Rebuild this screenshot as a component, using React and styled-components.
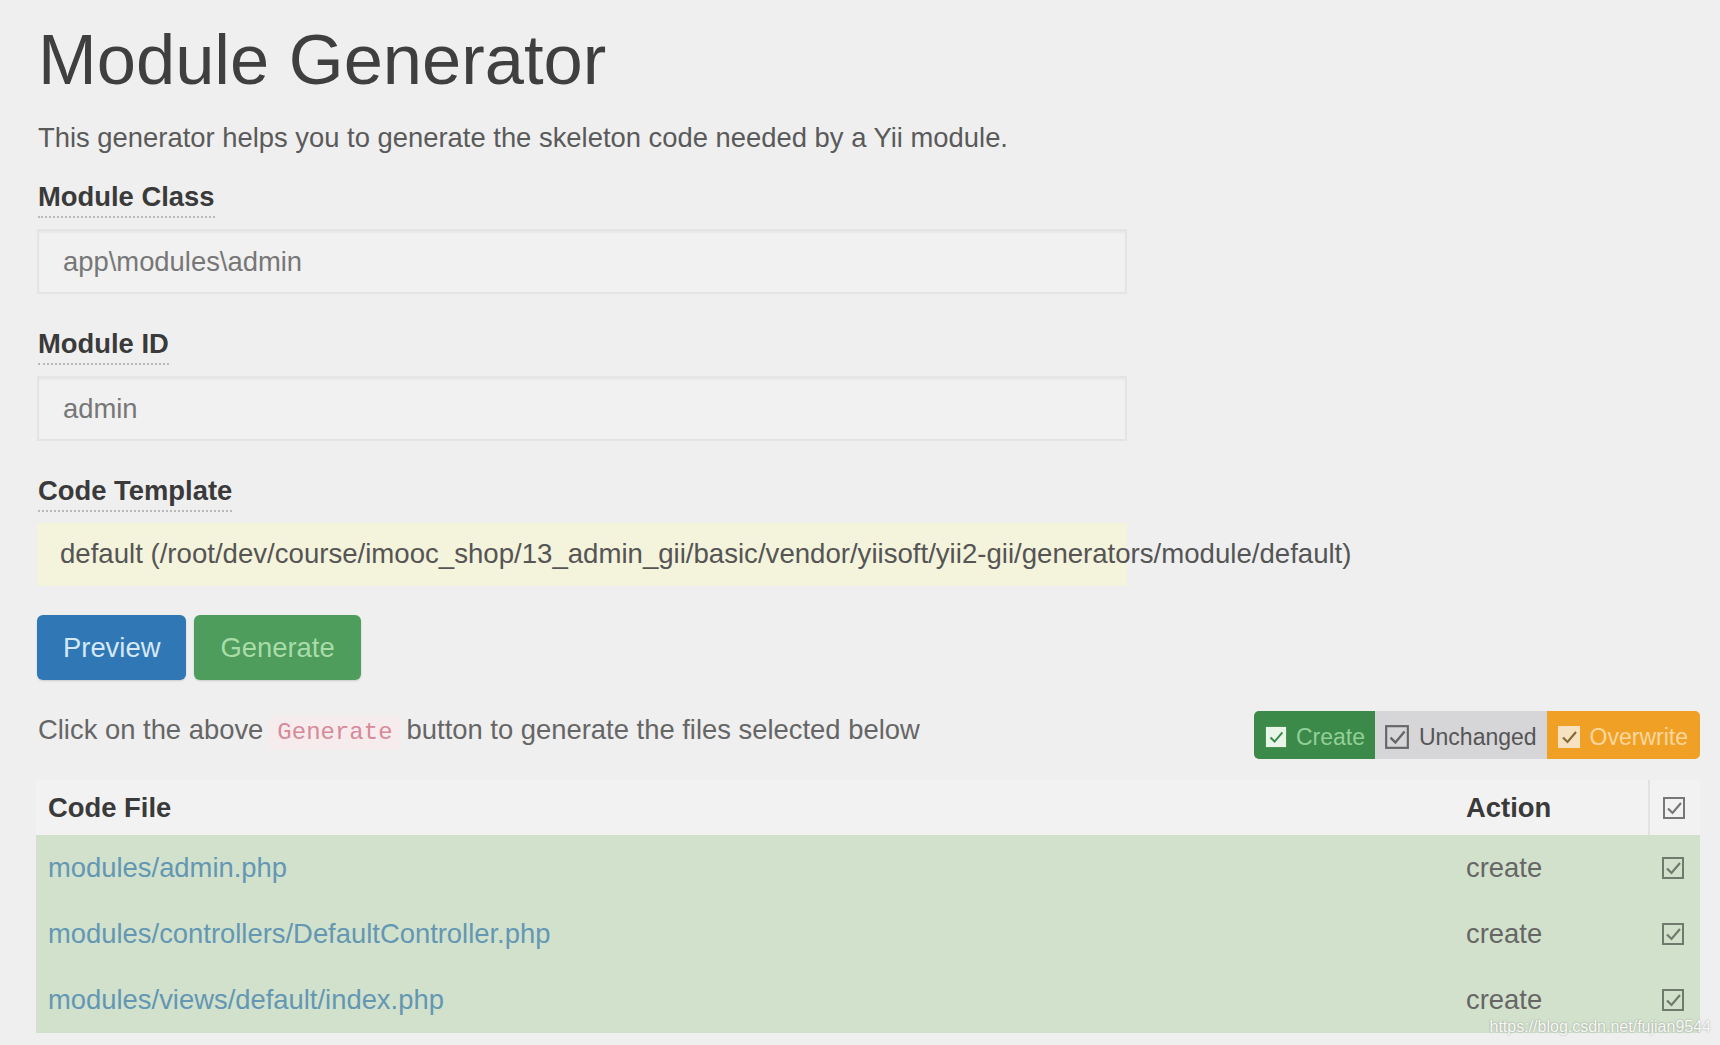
import React from 'react';
import styled, { createGlobalStyle } from 'styled-components';

const GlobalStyle = createGlobalStyle`
  body {
    margin: 0;
    background: #efefef;
    font-family: "Liberation Sans", Arial, sans-serif;
    color: #555;
  }
`;

const Page = styled.div`
  position: relative;
  padding: 21px 20px 0 37px;
  height: 1045px;
  box-sizing: border-box;
  overflow: hidden;
`;

const Title = styled.h1`
  margin: 0;
  font-size: 70.5px;
  line-height: 78px;
  font-weight: normal;
  color: #3f3f3f;
  padding-left: 1px;
`;

const Lead = styled.p`
  margin: 20px 0 0 1px;
  font-size: 27.4px;
  line-height: 38px;
  color: #5a5a5a;
`;

const Form = styled.div`
  width: 1090px;
`;

const Group = styled.div`
  margin-top: ${(p) => p.$top || 31}px;
  display: flex;
  flex-direction: column;
  align-items: flex-start;
`;

const Label = styled.label`
  display: inline-block;
  margin-left: 1px;
  font-size: 27.4px;
  line-height: 38px;
  font-weight: bold;
  color: #3a3a3a;
  border-bottom: 2px dotted #b9b9b9;
  margin-bottom: 11px;
`;

const Input = styled.input`
  box-sizing: border-box;
  width: 100%;
  height: 65px;
  padding: 0 24px;
  background: #f1f1f1;
  border: 2px solid #e4e4e4;
  box-shadow: inset 0 2px 2px rgba(0, 0, 0, 0.04);
  font-family: "Liberation Sans", Arial, sans-serif;
  font-size: 27.4px;
  color: #777;
  outline: none;
`;

const StickyValue = styled.div`
  box-sizing: border-box;
  width: 100%;
  height: 63px;
  padding: 0 23px;
  background: #f4f3dc;
  white-space: pre;
  font-size: 27.6px;
  line-height: 62px;
  color: #555;
`;

const Buttons = styled.div`
  display: flex;
  gap: 8px;
  margin-top: 29px;
`;

const Button = styled.button`
  height: 65px;
  padding: 0 26px;
  border: none;
  border-radius: 6px;
  font-family: "Liberation Sans", Arial, sans-serif;
  font-size: 27.4px;
  background: ${(p) => p.$bg};
  color: ${(p) => p.$fg};
  box-shadow: 0 1px 2px rgba(0, 0, 0, 0.15);
`;

const HintRow = styled.div`
  display: flex;
  justify-content: space-between;
  align-items: flex-start;
  margin-top: 31px;
`;

const Hint = styled.p`
  margin: 0 0 0 1px;
  font-size: 27.4px;
  line-height: 38px;
  color: #666;
`;

const Code = styled.code`
  font-family: "Liberation Mono", "DejaVu Sans Mono", monospace;
  font-size: 24px;
  padding: 3px 8px;
  margin: 0 6px;
  color: #d68a9a;
  background: #f6eced;
  border-radius: 4px;
`;

const Legend = styled.div`
  display: flex;
  height: 48px;
  border-radius: 5px;
  overflow: hidden;
`;

const LegendItem = styled.div`
  display: flex;
  align-items: center;
  gap: 9px;
  padding: 4px ${(p) => p.$right || 10}px 0 ${(p) => p.$left || 11}px;
  background: ${(p) => p.$bg};
  color: ${(p) => p.$fg};
  font-size: 23px;
`;

const Table = styled.table`
  margin-top: 21px;
  width: 1664px;
  margin-left: -1px;
  border-collapse: collapse;
  font-size: 27.4px;
`;

const HeadCell = styled.th`
  height: 55px;
  padding: 0 12px;
  text-align: left;
  background: #f2f2f2;
  color: #3a3a3a;
  font-weight: bold;
  border-left: ${(p) => (p.$line ? '2px solid #e2e2e2' : 'none')};
`;

const Row = styled.tr`
  background: #d2e1cc;
`;

const Cell = styled.td`
  height: 66px;
  padding: 0 12px;
  color: #666;
`;

const FileLink = styled.a`
  color: #6397b3;
  text-decoration: none;
`;

const Watermark = styled.div`
  position: absolute;
  right: 9px;
  bottom: 9px;
  font-size: 16px;
  color: #f8f8f8;
  text-shadow: 0 0 2px rgba(0, 0, 0, 0.35);
`;

const Check = ({ box = '#666', tick = '#666', fill = 'none', size = 24 }) => (
  <svg width={size} height={size} viewBox="0 0 24 24" style={{ display: 'block' }}>
    <rect x="2" y="2" width="20" height="20" fill={fill} stroke={box} strokeWidth="2" />
    <path d="M6 12.5l4.5 4.5L19 7" fill="none" stroke={tick} strokeWidth="2.2" />
  </svg>
);

const files = [
  'modules/admin.php',
  'modules/controllers/DefaultController.php',
  'modules/views/default/index.php',
];

export default function App() {
  return (
    <Page>
      <GlobalStyle />
      <Title>Module Generator</Title>
      <Lead>This generator helps you to generate the skeleton code needed by a Yii module.</Lead>

      <Form>
        <Group $top={21}>
          <Label>Module Class</Label>
          <Input readOnly value="app\modules\admin" />
        </Group>
        <Group>
          <Label>Module ID</Label>
          <Input readOnly value="admin" />
        </Group>
        <Group>
          <Label>Code Template</Label>
          <StickyValue>default (/root/dev/course/imooc_shop/13_admin_gii/basic/vendor/yiisoft/yii2-gii/generators/module/default)</StickyValue>
        </Group>
        <Buttons>
          <Button $bg="#2f77b5" $fg="#d6e8f7">Preview</Button>
          <Button $bg="#4e9d5c" $fg="#a9dca9">Generate</Button>
        </Buttons>
      </Form>

      <HintRow>
        <Hint>
          Click on the above<Code>Generate</Code>button to generate the files selected below
        </Hint>
        <Legend>
          <LegendItem $bg="#3b8a4a" $fg="#93cf97">
            <Check box="#eaf5ea" tick="#3b8a4a" fill="#eaf5ea" size={22} />
            Create
          </LegendItem>
          <LegendItem $bg="#d6d6d9" $fg="#555" $left={9}>
            <Check box="#666" tick="#666" size={26} />
            Unchanged
          </LegendItem>
          <LegendItem $bg="#f0a125" $fg="#fbd79f" $left={10} $right={12}>
            <Check box="#f6e2c0" tick="#8a6a3a" fill="#f6e2c0" size={24} />
            Overwrite
          </LegendItem>
        </Legend>
      </HintRow>

      <Table>
        <thead>
          <tr>
            <HeadCell>Code File</HeadCell>
            <HeadCell style={{ width: 170 }}>Action</HeadCell>
            <HeadCell $line style={{ width: 26 }}>
              <Check box="#777" tick="#777" />
            </HeadCell>
          </tr>
        </thead>
        <tbody>
          {files.map((f) => (
            <Row key={f}>
              <Cell>
                <FileLink href="#">{f}</FileLink>
              </Cell>
              <Cell>create</Cell>
              <Cell>
                <Check box="#6f7a6c" tick="#6f7a6c" />
              </Cell>
            </Row>
          ))}
        </tbody>
      </Table>

      <Watermark>https://blog.csdn.net/fujian9544</Watermark>
    </Page>
  );
}
